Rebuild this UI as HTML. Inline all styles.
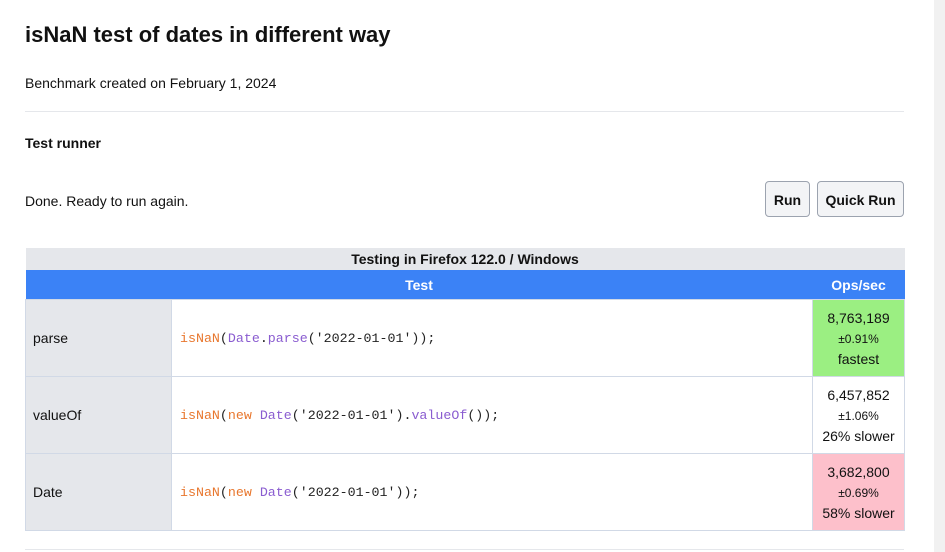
<!DOCTYPE html>
<html><head><style>
body{margin:0;width:945px;height:552px;overflow:hidden;background:#fff;font-family:"Liberation Sans",sans-serif;color:#111;position:relative}
.sb{position:absolute;left:934px;top:0;width:11px;height:552px;background:#f1f1f1}
h1{position:absolute;left:25px;top:22px;margin:0;font-size:22px;font-weight:bold}
.t{position:absolute;font-size:14px}
.hr{position:absolute;left:25px;width:879px;height:1px;background:#e5e7eb}
.btn{position:absolute;top:181px;height:36px;border:1px solid #9ca3af;border-radius:4px;background:#f3f4f6;font-weight:bold;font-size:14px;line-height:36px;text-align:center;box-sizing:border-box}
table{position:absolute;left:25px;top:248px;width:880px;border-collapse:collapse;font-size:14px}
td,th{padding:0}
.cap{background:#e5e7eb;height:22px;text-align:center;font-weight:bold;font-size:14px}
.hd th{background:#3b82f6;color:#fff;height:29px;font-weight:bold}
.r td{border:1px solid #d1d9e6;height:76px}
.n{background:#e5e7eb;width:138px;padding-left:7px!important}
.c{font-family:"Liberation Mono",monospace;font-size:13.3px;padding-left:8px!important;color:#222}
.o{color:#e8772e}.p{color:#8a5cd0}
.ops{width:91px;text-align:center;line-height:20px}
.ops small{font-size:12px}
</style></head><body>
<div class="sb"></div>
<h1>isNaN test of dates in different way</h1>
<div class="t" style="left:25px;top:75px">Benchmark created on February 1, 2024</div>
<div class="hr" style="top:111px"></div>
<div class="t" style="left:25px;top:135px;font-weight:bold">Test runner</div>
<div class="t" style="left:25px;top:193px">Done. Ready to run again.</div>
<div class="btn" style="left:765px;width:45px">Run</div>
<div class="btn" style="left:817px;width:87px">Quick Run</div>
<table>
<tr><td colspan="3" class="cap">Testing in Firefox 122.0 / Windows</td></tr>
<tr class="hd"><th colspan="2">Test</th><th>Ops/sec</th></tr>
<tr class="r"><td class="n">parse</td><td class="c"><span class="o">isNaN</span>(<span class="p">Date</span>.<span class="p">parse</span>('2022-01-01'));</td><td class="ops" style="background:#9bef82">8,763,189<br><small>±0.91%</small><br>fastest</td></tr>
<tr class="r"><td class="n">valueOf</td><td class="c"><span class="o">isNaN</span>(<span class="o">new</span> <span class="p">Date</span>('2022-01-01').<span class="p">valueOf</span>());</td><td class="ops">6,457,852<br><small>±1.06%</small><br>26% slower</td></tr>
<tr class="r"><td class="n">Date</td><td class="c"><span class="o">isNaN</span>(<span class="o">new</span> <span class="p">Date</span>('2022-01-01'));</td><td class="ops" style="background:#fdc0cb">3,682,800<br><small>±0.69%</small><br>58% slower</td></tr>
</table>
<div class="hr" style="top:549px"></div>
</body></html>
